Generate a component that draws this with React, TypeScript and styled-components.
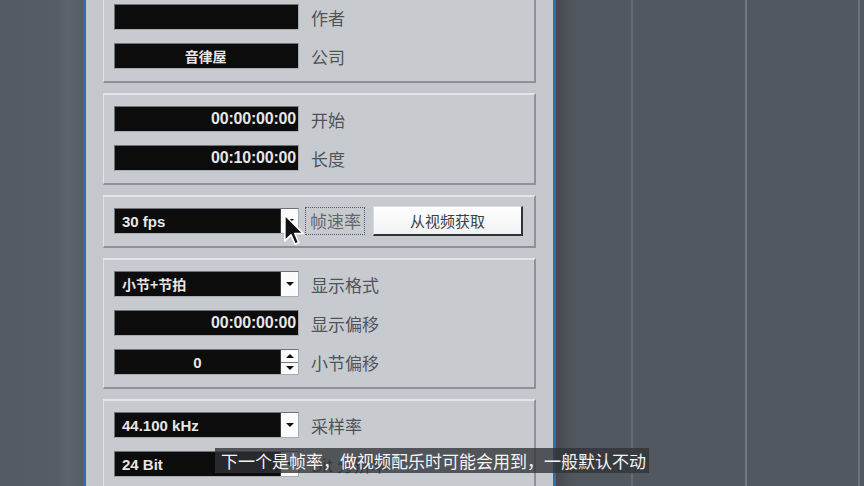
import styled, {createGlobalStyle} from 'styled-components'

const GlobalStyle = createGlobalStyle`
  html, body {
    margin: 0;
    padding: 0;
    background: #50565e;
    overflow: hidden;
  }
`

const Screen = styled.div`
  position: relative;
  width: 864px;
  height: 486px;
  display: flex;
  overflow: hidden;
  font-family: "Liberation Sans", "Noto Sans CJK SC", sans-serif;
`

const LeftPane = styled.div`
  width: 83px;
  flex-shrink: 0;
  background: linear-gradient(90deg, #545a61 0%, #575d64 70%, #5e646b 82%, #565c63 100%);
  border-right: 3px solid #2f6dac;
`

const Dialog = styled.div`
  width: 470px;
  flex-shrink: 0;
  background: #c4c8cd;
  border-right: 3px solid #2f6dac;
  padding: 0 17px 0 17px;
  box-sizing: border-box;
  display: flex;
  flex-direction: column;
  gap: 10px;
`

const Group = styled.div<{$clipped?: boolean}>`
  display: flex;
  flex-direction: column;
  gap: 13px;
  padding: ${p => (p.$clipped ? '4px' : '11px')} 0 12px 10px;
  background: #c7cbd0;
  border-top: ${p => (p.$clipped ? 'none' : '2px solid #e3e6e9')};
  border-left: 1px solid #e0e3e6;
  border-right: 2px solid #8e9298;
  border-bottom: 2px solid #8e9298;
`

const Row = styled.div`
  display: flex;
  align-items: center;
  height: 26px;
`

const Field = styled.div<{$align?: 'left' | 'center' | 'right'}>`
  width: 185px;
  height: 26px;
  box-sizing: border-box;
  background: #0c0c0c;
  border: 1px solid #6f7379;
  border-right-color: #a9adb2;
  border-bottom-color: #a9adb2;
  display: flex;
  align-items: center;
  justify-content: ${p =>
    p.$align === 'right' ? 'flex-end' : p.$align === 'center' ? 'center' : 'flex-start'};
  padding: ${p => (p.$align === 'left' ? '0 0 0 8px' : '0 2px 0 0')};
  color: #e6e6e6;
  font-size: 16px;
  font-weight: bold;
  letter-spacing: -0.2px;
  white-space: nowrap;
`

const SmallText = styled.span`
  font-size: 14px;
  font-family: "Noto Sans CJK SC", sans-serif;
  font-weight: bold;
`

const ValueText = styled.span`
  font-size: 15px;
`

const Combo = styled.div`
  width: 185px;
  height: 26px;
  box-sizing: border-box;
  display: flex;
  border: 1px solid #6f7379;
  border-right-color: #a9adb2;
  border-bottom-color: #a9adb2;
`

const ComboValue = styled.div<{$center?: boolean}>`
  flex: 1;
  background: #0c0c0c;
  color: #e6e6e6;
  font-weight: bold;
  display: flex;
  align-items: center;
  justify-content: ${p => (p.$center ? 'center' : 'flex-start')};
  padding-left: ${p => (p.$center ? '0' : '7px')};
  white-space: nowrap;
`

const DropButton = styled.div`
  width: 17px;
  background: #fbfbfb;
  border-left: 1px solid #3a3a3a;
  display: flex;
  align-items: center;
  justify-content: center;
`

const SpinButtons = styled.div`
  width: 17px;
  background: #fbfbfb;
  border-left: 1px solid #3a3a3a;
  display: flex;
  flex-direction: column;
`

const SpinHalf = styled.div<{$top?: boolean}>`
  flex: 1;
  display: flex;
  align-items: center;
  justify-content: center;
  border-bottom: ${p => (p.$top ? '1px solid #7a7a7a' : 'none')};
`

const Tri = styled.div<{$up?: boolean}>`
  width: 0;
  height: 0;
  border-left: 4px solid transparent;
  border-right: 4px solid transparent;
  ${p => (p.$up ? 'border-bottom: 4px solid #111;' : 'border-top: 4px solid #111;')}
`

const Label = styled.span<{$focused?: boolean}>`
  margin-left: ${p => (p.$focused ? '6px' : '12px')};
  font-family: "Noto Sans CJK SC", sans-serif;
  font-size: 17px;
  color: ${p => (p.$focused ? '#63676d' : '#4f5358')};
  white-space: nowrap;
  ${p =>
    p.$focused &&
    `
    padding: 0 3px 0 4px;
    height: 26px;
    line-height: 26px;
    border: 1px dotted #55595f;
  `}
`

const ActionButton = styled.button`
  margin-left: 8px;
  width: 150px;
  height: 30px;
  background: linear-gradient(#ffffff, #f1f2f3);
  border: 1px solid #d9dcdf;
  border-right: 2px solid #303236;
  border-bottom: 2px solid #303236;
  font-family: "Noto Sans CJK SC", sans-serif;
  font-size: 15px;
  color: #3c3f44;
  padding: 0;
`

const RightPane = styled.div`
  flex: 1;
  display: flex;
  background: linear-gradient(90deg, #45494e 0px, #4e535a 12px, #525860 22px);
`

const Lane = styled.div<{$w: number; $line: string}>`
  width: ${p => p.$w}px;
  flex-shrink: 0;
  border-right: 2px solid ${p => p.$line};
`

const Subtitle = styled.div`
  position: absolute;
  left: 215px;
  top: 448px;
  height: 25px;
  padding: 0 3px 0 6px;
  background: rgba(48, 50, 54, 0.78);
  color: #f4f4f4;
  font-family: "Noto Sans CJK SC", sans-serif;
  font-size: 17px;
  line-height: 25px;
  white-space: nowrap;
`

const Cursor = styled.svg`
  position: absolute;
  left: 284px;
  top: 214px;
`

const Drop = () => (
  <DropButton>
    <Tri />
  </DropButton>
)

const App = () => {
  return (
    <Screen>
      <GlobalStyle />
      <LeftPane />
      <Dialog>
        <Group $clipped>
          <Row>
            <Field $align="center" />
            <Label>作者</Label>
          </Row>
          <Row>
            <Field $align="center">
              <SmallText>音律屋</SmallText>
            </Field>
            <Label>公司</Label>
          </Row>
        </Group>

        <Group>
          <Row>
            <Field $align="right">00:00:00:00</Field>
            <Label>开始</Label>
          </Row>
          <Row>
            <Field $align="right">00:10:00:00</Field>
            <Label>长度</Label>
          </Row>
        </Group>

        <Group>
          <Row>
            <Combo>
              <ComboValue>
                <ValueText>30 fps</ValueText>
              </ComboValue>
              <Drop />
            </Combo>
            <Label $focused>帧速率</Label>
            <ActionButton>从视频获取</ActionButton>
          </Row>
        </Group>

        <Group>
          <Row>
            <Combo>
              <ComboValue>
                <SmallText>小节+节拍</SmallText>
              </ComboValue>
              <Drop />
            </Combo>
            <Label>显示格式</Label>
          </Row>
          <Row>
            <Field $align="right">00:00:00:00</Field>
            <Label>显示偏移</Label>
          </Row>
          <Row>
            <Combo>
              <ComboValue $center>
                <ValueText>0</ValueText>
              </ComboValue>
              <SpinButtons>
                <SpinHalf $top>
                  <Tri $up />
                </SpinHalf>
                <SpinHalf>
                  <Tri />
                </SpinHalf>
              </SpinButtons>
            </Combo>
            <Label>小节偏移</Label>
          </Row>
        </Group>

        <Group>
          <Row>
            <Combo>
              <ComboValue>
                <ValueText>44.100 kHz</ValueText>
              </ComboValue>
              <Drop />
            </Combo>
            <Label>采样率</Label>
          </Row>
          <Row>
            <Combo>
              <ComboValue>
                <ValueText>24 Bit</ValueText>
              </ComboValue>
              <Drop />
            </Combo>
            <Label>Bit 分辨率</Label>
          </Row>
        </Group>
      </Dialog>

      <RightPane>
        <Lane $w={75} $line="#646a72" />
        <Lane $w={112} $line="#737981" />
        <Lane $w={111} $line="#6e747b" />
      </RightPane>

      <Cursor width="20" height="32" viewBox="0 0 12 19">
        <path
          d="M0.5 0.5 L0.5 16 L4.2 12.4 L6.6 18 L8.8 17 L6.5 11.6 L11.5 11.6 Z"
          fill="#111"
          stroke="#fff"
          strokeWidth="1"
          strokeLinejoin="round"
        />
      </Cursor>

      <Subtitle>下一个是帧率，做视频配乐时可能会用到，一般默认不动</Subtitle>
    </Screen>
  )
}

export default App
